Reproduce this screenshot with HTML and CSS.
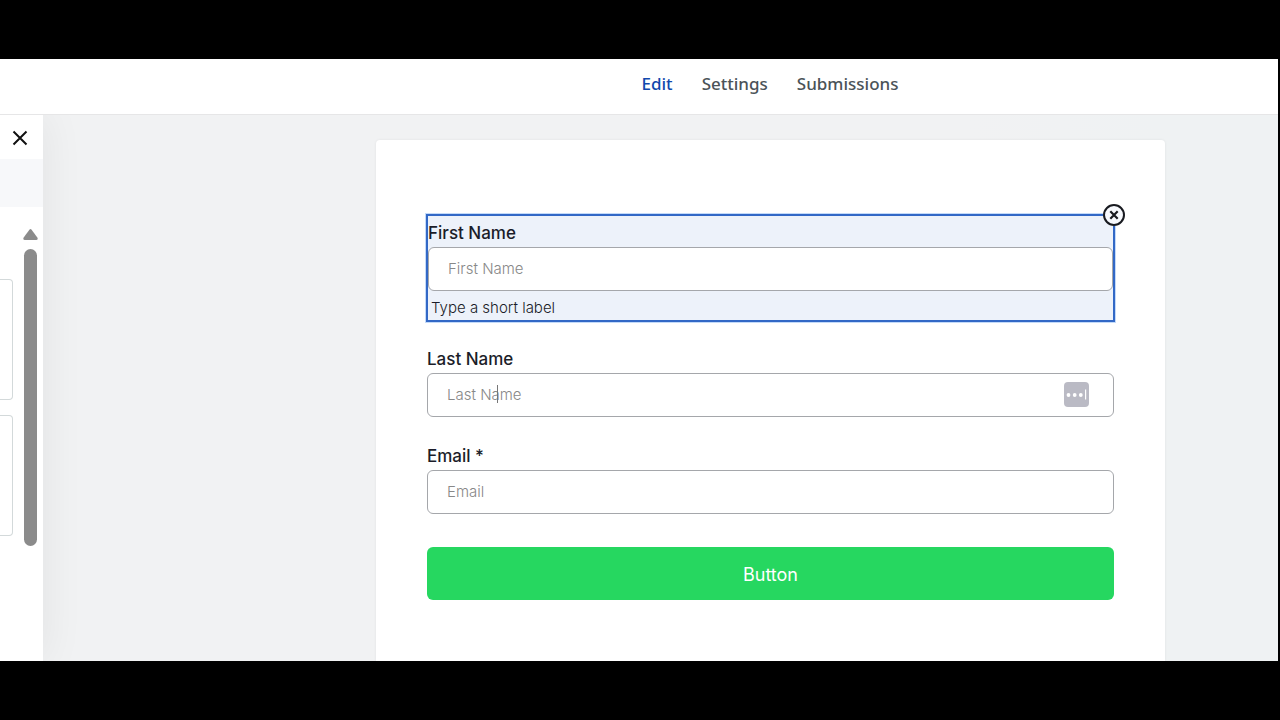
FILE: index.html
```html
<!DOCTYPE html>
<html lang="en">
<head>
  <meta charset="UTF-8" />
  <meta name="viewport" content="width=device-width, initial-scale=1.0"/>
  <title>Form Builder</title>
  <link rel="stylesheet" href="styles.css">
</head>
<body>

  <div class="app">
    <header class="topbar">
      <nav>
        <a href="#" class="active">Edit</a>
        <a href="#">Settings</a>
        <a href="#">Submissions</a>
      </nav>
    </header>

    <div class="workspace">
      <!-- Elements panel -->
      <aside class="panel">
        <div class="panel-header">
          <button class="panel-close" aria-label="Close panel">
            <svg width="16" height="16" viewBox="0 0 16 16" fill="none" stroke="#111" stroke-width="2">
              <path d="M1.5 1.5l13 13M14.5 1.5l-13 13"/>
            </svg>
          </button>
        </div>
        <div class="panel-tabs"></div>
        <div class="panel-body">
          <div class="panel-items">
            <div class="panel-item"></div>
            <div class="panel-item"></div>
          </div>
          <div class="scrollbar">
            <svg width="15" height="11" viewBox="0 0 15 11" fill="#8b8b8b">
              <path d="M6.4 .7Q7.5-.5 8.6 .7L14.5 8.8Q15.2 11 13.2 11H1.8Q-.2 11 .5 8.8z"/>
            </svg>
            <div class="scroll-thumb"></div>
          </div>
        </div>
      </aside>

      <main class="canvas">
        <form class="form-card">
          <div class="field selected">
            <label for="firstName">First Name</label>
            <input type="text" id="firstName" placeholder="First Name">
            <p class="help-text">Type a short label</p>
            <button type="button" class="remove-btn" aria-label="Remove field">
              <svg width="24" height="24" viewBox="0 0 24 24" fill="none" stroke="#181a20" stroke-width="2">
                <circle cx="12" cy="12" r="11" fill="#fff" stroke="none"/>
                <circle cx="12" cy="12" r="10" fill="#f7f9fd"/>
                <path d="M8.3 8.3l7.4 7.4M15.7 8.3l-7.4 7.4" stroke-width="2.2"/>
              </svg>
            </button>
          </div>

          <div class="field">
            <label for="lastName">Last Name</label>
            <div class="input-wrap">
              <input type="text" id="lastName" placeholder="Last Name">
              <span class="text-cursor"></span>
              <button type="button" class="autofill-btn" aria-label="Autofill">
                <svg width="25" height="25" viewBox="0 0 25 25" fill="#fff">
                  <rect width="25" height="25" rx="4" fill="#babac4"/>
                  <circle cx="4.5" cy="13" r="1.9"/>
                  <circle cx="10.7" cy="13" r="1.9"/>
                  <circle cx="16.8" cy="13" r="1.9"/>
                  <rect x="21" y="7.5" width="1.2" height="10"/>
                </svg>
              </button>
            </div>
          </div>

          <div class="field">
            <label for="email">Email *</label>
            <input type="email" id="email" placeholder="Email">
          </div>

          <button type="button" class="submit-btn">Button</button>
        </form>
      </main>
    </div>
  </div>

</body>
</html>
```
FILE: styles.css
```css
* {
  box-sizing: border-box;
}

body {
  margin: 0;
  height: 100vh;
  padding: 59px 2px 59px 0;
  background-color: #000;
  font-family: Inter, "Liberation Sans", sans-serif;
  color: #1b1d29;
}

button {
  padding: 0;
  border: none;
  background: none;
  font-family: inherit;
  cursor: pointer;
}

svg {
  display: block;
}

.app {
  height: 100%;
  display: flex;
  flex-direction: column;
  overflow: hidden;
  background-color: #f1f2f3;
}

.topbar {
  flex: none;
  height: 56px;
  padding: 0 0 6px 262px;
  display: flex;
  justify-content: center;
  align-items: center;
  background-color: #fff;
  border-bottom: 1px solid #e6e6e7;
}

nav {
  display: flex;
  gap: 29px;
}

nav a {
  font-family: "Noto Sans", "Open Sans", sans-serif;
  font-size: 17px;
  font-weight: 500;
  color: #4b5358;
  text-decoration: none;
}

nav a.active {
  color: #1149ad;
}

.workspace {
  flex: 1;
  min-height: 0;
  display: flex;
}

/* Left panel */
.panel {
  flex: none;
  width: 43px;
  display: flex;
  flex-direction: column;
  background-color: #fff;
  box-shadow: 0 0 44px rgba(0, 0, 0, 0.07);
  clip-path: inset(0 -60px 0 0);
}

.panel-header {
  height: 44px;
  padding: 15px 0 0 12px;
}

.panel-tabs {
  height: 48px;
  background-color: #f7f8fa;
}

.panel-body {
  flex: 1;
  display: flex;
  justify-content: space-between;
  padding-right: 5px;
}

.panel-items {
  width: 13px;
  padding-top: 72px;
  display: flex;
  flex-direction: column;
  gap: 15px;
}

.panel-item {
  height: 121px;
  border: 1px solid #d3d9da;
  border-left: none;
  border-radius: 0 4px 4px 0;
}

.scrollbar {
  padding-top: 22px;
  display: flex;
  flex-direction: column;
  align-items: center;
  gap: 9px;
}

.scroll-thumb {
  width: 13px;
  height: 297px;
  border-radius: 7px;
  background-color: #8b8b8b;
}

/* Form canvas */
.canvas {
  flex: 1;
  padding: 25px 0 0 220px;
  display: flex;
  justify-content: center;
  background: linear-gradient(to right, transparent 75%, #eff2f3 90%);
}

.form-card {
  width: 100%;
  max-width: 789px;
  padding: 74px 51px 0;
  background-color: #fff;
  border-radius: 4px 4px 0 0;
  box-shadow: 0 0 3px rgba(0, 0, 0, 0.07);
}

.field {
  margin-bottom: 22px;
}

.field label {
  display: block;
  height: 31px;
  padding-top: 3px;
  line-height: 28px;
  font-size: 17px;
  font-weight: 500;
}

.field input {
  display: block;
  width: 100%;
  height: 44px;
  padding: 0 19px 2px;
  border: 1px solid #a5a7ab;
  border-radius: 6px;
  background-color: #fff;
  font-family: inherit;
  font-size: 15px;
  font-weight: 300;
}

.field input::placeholder {
  color: #888;
}

.field.selected {
  position: relative;
  margin: 0 -1px 20px;
  border: 2px solid #3268c6;
  background-color: #edf2fa;
  box-shadow: 0 0 0 1px #c3daf9;
}

.help-text {
  margin: 0;
  padding: 4px 0 0 3px;
  font-size: 15px;
  font-weight: 300;
  line-height: 25px;
}

.remove-btn {
  position: absolute;
  top: -13px;
  right: -13px;
}

.input-wrap {
  position: relative;
}

.text-cursor {
  position: absolute;
  top: 12px;
  left: 70px;
  width: 1px;
  height: 18px;
  background-color: #777;
}

.autofill-btn {
  position: absolute;
  top: 9px;
  right: 25px;
}

.submit-btn {
  width: 100%;
  height: 53px;
  margin-top: 11px;
  padding-top: 1px;
  border-radius: 6px;
  background-color: #26d760;
  color: #fff;
  font-size: 18px;
}
```
